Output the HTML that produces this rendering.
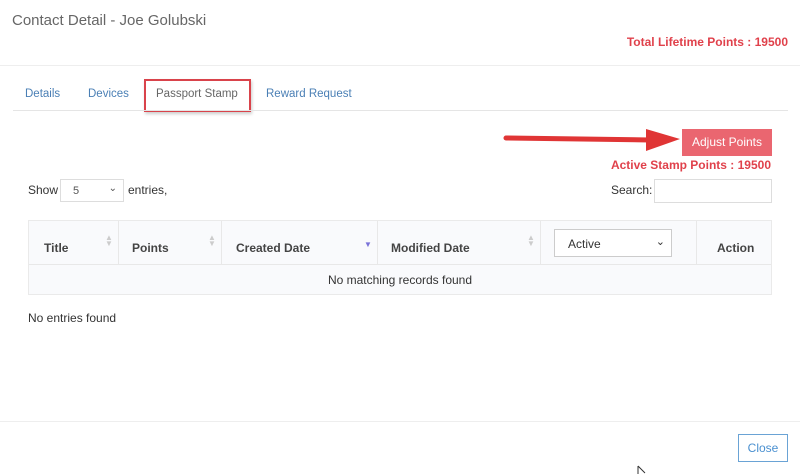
<!DOCTYPE html>
<html><head><style>
*{box-sizing:border-box}
body{margin:0;width:800px;height:474px;background:#fff;font-family:"Liberation Sans",sans-serif;position:relative;overflow:hidden;color:#333}
.a{position:absolute}
</style></head><body>
<div class="a" style="left:12px;top:12px;font-size:15px;color:#666">Contact Detail - Joe Golubski</div>
<div class="a" style="right:12px;top:35px;font-size:12px;font-weight:bold;color:#e0414b">Total Lifetime Points : 19500</div>
<div class="a" style="left:0;top:65px;width:800px;height:1px;background:#eee"></div>
<div class="a" style="left:25px;top:88px;font-size:11.5px;color:#4a7fb5">Details</div>
<div class="a" style="left:88px;top:88px;font-size:11.5px;color:#4a7fb5">Devices</div>
<div class="a" style="left:144px;top:79px;width:107px;height:33px;border:2px solid #d9434b;box-shadow:1px 2px 3px rgba(0,0,0,.2)"></div>
<div class="a" style="left:156px;top:88px;font-size:11.5px;color:#666">Passport Stamp</div>
<div class="a" style="left:266px;top:88px;font-size:11.5px;color:#4a7fb5">Reward Request</div>
<div class="a" style="left:13px;top:110px;width:775px;height:1px;background:#e5e5e5"></div>
<svg class="a" style="left:500px;top:126px" width="182" height="30"><path d="M6 12 L150 14" stroke="#e03535" stroke-width="5" stroke-linecap="round"/><path d="M146 3 L180 13 L146 25 Z" fill="#e03535"/></svg>
<div class="a" style="left:682px;top:129px;width:90px;height:27px;background:#ea6670;color:#fff;font-size:12px;text-align:center;line-height:27px">Adjust Points</div>
<div class="a" style="right:29px;top:158px;font-size:12px;font-weight:bold;color:#e0414b">Active Stamp Points : 19500</div>
<div class="a" style="left:28px;top:183px;font-size:12px">Show</div>
<div class="a" style="left:60px;top:179px;width:64px;height:23px;border:1px solid #ddd;font-size:11px;padding:5px 0 0 12px;color:#555">5<span style="position:absolute;right:6px;top:3px;font-size:10px">&#8964;</span></div>
<div class="a" style="left:128px;top:183px;font-size:12px">entries,</div>
<div class="a" style="left:611px;top:183px;font-size:12px">Search:</div>
<div class="a" style="left:654px;top:179px;width:118px;height:24px;border:1px solid #ddd"></div>
<div class="a" style="left:28px;top:220px;width:744px;height:75px;border:1px solid #eaeaea">
 <div class="a" style="left:0;top:0;width:742px;height:44px;background:#f9fafc;border-bottom:1px solid #e8e8e8"></div>
 <div class="a" style="left:0;top:44px;width:742px;height:29px;background:#f9fafc"></div>
 <div class="a" style="left:89px;top:0;width:1px;height:44px;background:#e8e8e8"></div>
 <div class="a" style="left:192px;top:0;width:1px;height:44px;background:#e8e8e8"></div>
 <div class="a" style="left:348px;top:0;width:1px;height:44px;background:#e8e8e8"></div>
 <div class="a" style="left:511px;top:0;width:1px;height:44px;background:#e8e8e8"></div>
 <div class="a" style="left:667px;top:0;width:1px;height:44px;background:#e8e8e8"></div>
 <div class="a" style="left:15px;top:20px;font-size:12px;font-weight:bold;color:#444">Title</div>
 <div class="a" style="left:103px;top:20px;font-size:12px;font-weight:bold;color:#444">Points</div>
 <div class="a" style="left:207px;top:20px;font-size:12px;font-weight:bold;color:#444">Created Date</div>
 <div class="a" style="left:362px;top:20px;font-size:12px;font-weight:bold;color:#444">Modified Date</div>
 <div class="a" style="left:688px;top:20px;font-size:12px;font-weight:bold;color:#444">Action</div>
 <div class="a" style="left:76px;top:14px;font-size:8px;color:#ccc;line-height:6px">▲<br>▼</div>
 <div class="a" style="left:179px;top:14px;font-size:8px;color:#ccc;line-height:6px">▲<br>▼</div>
 <div class="a" style="left:498px;top:14px;font-size:8px;color:#ccc;line-height:6px">▲<br>▼</div>
 <div class="a" style="left:335px;top:19px;font-size:8px;color:#7a72d8">▼</div>
 <div class="a" style="left:525px;top:8px;width:118px;height:28px;border:1px solid #ccc;background:#fff;font-size:12px;padding:7px 0 0 13px">Active<span style="position:absolute;right:6px;top:5px;font-size:11px">&#8964;</span></div>
 <div class="a" style="left:0;top:52px;width:742px;text-align:center;font-size:12px">No matching records found</div>
</div>
<div class="a" style="left:28px;top:311px;font-size:12px">No entries found</div>
<div class="a" style="left:0;top:421px;width:800px;height:1px;background:#eee"></div>
<div class="a" style="left:738px;top:434px;width:50px;height:28px;border:1px solid #6aa3d5;color:#4a90d0;font-size:12px;text-align:center;line-height:26px">Close</div>
<svg class="a" style="left:637px;top:465px" width="10" height="10"><path d="M1 1 L1 9 M1 1 L8 8" stroke="#333" fill="none"/></svg>
</body></html>
